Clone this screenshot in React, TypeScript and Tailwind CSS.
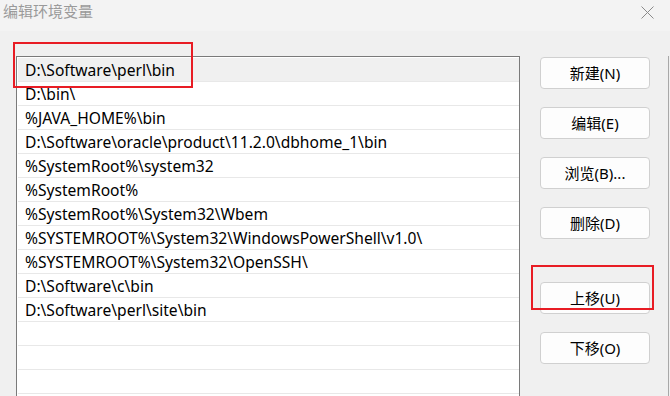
const paths = [
  "D:\\Software\\perl\\bin",
  "D:\\bin\\",
  "%JAVA_HOME%\\bin",
  "D:\\Software\\oracle\\product\\11.2.0\\dbhome_1\\bin",
  "%SystemRoot%\\system32",
  "%SystemRoot%",
  "%SystemRoot%\\System32\\Wbem",
  "%SYSTEMROOT%\\System32\\WindowsPowerShell\\v1.0\\",
  "%SYSTEMROOT%\\System32\\OpenSSH\\",
  "D:\\Software\\c\\bin",
  "D:\\Software\\perl\\site\\bin",
  "",
  "",
  "",
];

const font = { fontFamily: '"Noto Sans", "Noto Sans CJK SC", sans-serif' };

function Btn({ label, className = "" }: { label: string; className?: string }) {
  return (
    <button
      className={`flex h-[32px] w-[110px] items-center justify-center rounded-[4px] border border-[#d0d0d0] bg-[#fdfdfd] text-[15px] text-black ${className}`}
    >
      {label}
    </button>
  );
}

export default function App() {
  return (
    <div
      className="relative flex h-[396px] w-[670px] flex-col overflow-hidden bg-[#f0f0f0]"
      style={font}
    >
      {/* title bar */}
      <div className="flex h-[31px] shrink-0 items-start justify-between bg-[#f3f3f3]">
        <span className="ml-[3px] mt-[1px] text-[15px] leading-[20px] text-[#9a9a9a]">编辑环境变量</span>
        <svg className="mr-[16px] mt-[6px]" width="13" height="13" viewBox="0 0 13 13">
          <path d="M0.5 0.5 L12.5 12.5 M12.5 0.5 L0.5 12.5" stroke="#8a8a8a" strokeWidth="1" />
        </svg>
      </div>

      <div className="flex flex-1 pl-[16px] pt-[25px]">
        {/* list */}
        <div className="flex w-[504px] flex-col border border-b-0 border-[#7a7a7a] bg-white pl-px pt-px">
          {paths.map((p, i) => (
            <div
              key={i}
              className={`flex h-[24px] shrink-0 items-center whitespace-nowrap border-b border-[#e8e8e8] pl-[7px] pt-[2px] text-[15.6px] leading-none text-black ${
                i === 0 ? "bg-[#f0f0f0]" : ""
              }`}
            >
              {p}
            </div>
          ))}
        </div>

        {/* buttons */}
        <div className="ml-[20px] flex flex-col pt-px">
          <Btn label="新建(N)" />
          <Btn label="编辑(E)" className="mt-[18px]" />
          <Btn label="浏览(B)..." className="mt-[18px]" />
          <Btn label="删除(D)" className="mt-[18px]" />
          <Btn label="上移(U)" className="mt-[43px]" />
          <Btn label="下移(O)" className="mt-[18px]" />
        </div>

        <div className="ml-auto mr-px w-px bg-[#a8a8a8]" />
      </div>

      {/* red annotation boxes */}
      <div className="absolute left-[13px] top-[42px] h-[46px] w-[180px] border-2 border-[#e81c24]" />
      <div className="absolute left-[531px] top-[265px] h-[45px] w-[123px] border-2 border-[#e81c24]" />
    </div>
  );
}
